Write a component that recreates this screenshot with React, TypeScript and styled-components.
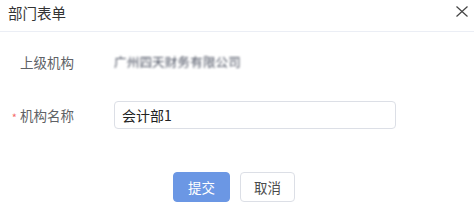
import React from "react";
import styled, { createGlobalStyle } from "styled-components";

const Global = createGlobalStyle`
  html, body { margin: 0; padding: 0; background: #fff; }
  body { font-family: "Noto Sans CJK SC", "Noto Sans", "Liberation Sans", sans-serif; }
  * { box-sizing: border-box; }
`;

const Dialog = styled.div`
  width: 474px;
  height: 207px;
  background: #fff;
  display: flex;
  flex-direction: column;
`;

const Header = styled.div`
  height: 32px;
  padding: 0 0 0 8px;
  border-bottom: 1px solid #ebeef5;
  display: flex;
  align-items: center;
  justify-content: space-between;
`;

const Title = styled.div`
  font-size: 14.5px;
  color: #333;
  line-height: 1;
  margin-top: -4px;
`;

const Close = styled.button`
  border: none;
  background: transparent;
  padding: 0;
  width: 24px;
  height: 24px;
  display: flex;
  align-items: center;
  justify-content: center;
  margin-top: -8px;
  cursor: pointer;
`;

const Form = styled.div`
  padding-top: 16px;
  display: flex;
  flex-direction: column;
  gap: 25px;
`;

const Row = styled.div`
  display: flex;
  align-items: center;
  height: 28px;
`;

const Label = styled.div`
  width: 114px;
  padding-right: 40px;
  text-align: right;
  font-size: 13.5px;
  color: #606266;
  white-space: nowrap;
`;

const Star = styled.span`
  color: #f56c6c;
  margin-right: 3px;
  font-size: 11px;
  position: relative;
  top: 1px;
`;

const Masked = styled.div`
  font-size: 12.5px;
  color: #4a5060;
  filter: blur(1.1px);
  letter-spacing: 0.2px;
  margin-top: -2px;
`;

const Input = styled.input`
  width: 282px;
  height: 28px;
  border: 1px solid #dcdfe6;
  border-radius: 4px;
  padding: 0 7px;
  font-family: inherit;
  font-size: 14px;
  font-weight: 400;
  color: #222;
  outline: none;
`;

const Actions = styled.div`
  margin-top: 43px;
  display: flex;
  gap: 10px;
  padding-left: 173px;
`;

const Button = styled.button<{ $primary?: boolean }>`
  height: 30px;
  width: ${(p) => (p.$primary ? "57px" : "55px")};
  border-radius: 4px;
  font-family: inherit;
  font-size: 13.5px;
  border: 1px solid ${(p) => (p.$primary ? "#6b97e4" : "#dcdfe6")};
  background: ${(p) => (p.$primary ? "#6b97e4" : "#fff")};
  color: ${(p) => (p.$primary ? "#fff" : "#4a4a4a")};
  padding: 0;
  cursor: pointer;
`;

export default function App() {
  return (
    <>
      <Global />
      <Dialog>
        <Header>
          <Title>部门表单</Title>
          <Close aria-label="关闭">
            <svg width="12" height="11" viewBox="0 0 12 11">
              <path d="M0.5 0.5 L11.5 10.5 M11.5 0.5 L0.5 10.5" stroke="#444" strokeWidth="1.2" />
            </svg>
          </Close>
        </Header>
        <Form>
          <Row>
            <Label>上级机构</Label>
            <Masked>广州四天财务有限公司</Masked>
          </Row>
          <Row>
            <Label>
              <Star>*</Star>机构名称
            </Label>
            <Input defaultValue="会计部1" />
          </Row>
        </Form>
        <Actions>
          <Button $primary>提交</Button>
          <Button>取消</Button>
        </Actions>
      </Dialog>
    </>
  );
}
